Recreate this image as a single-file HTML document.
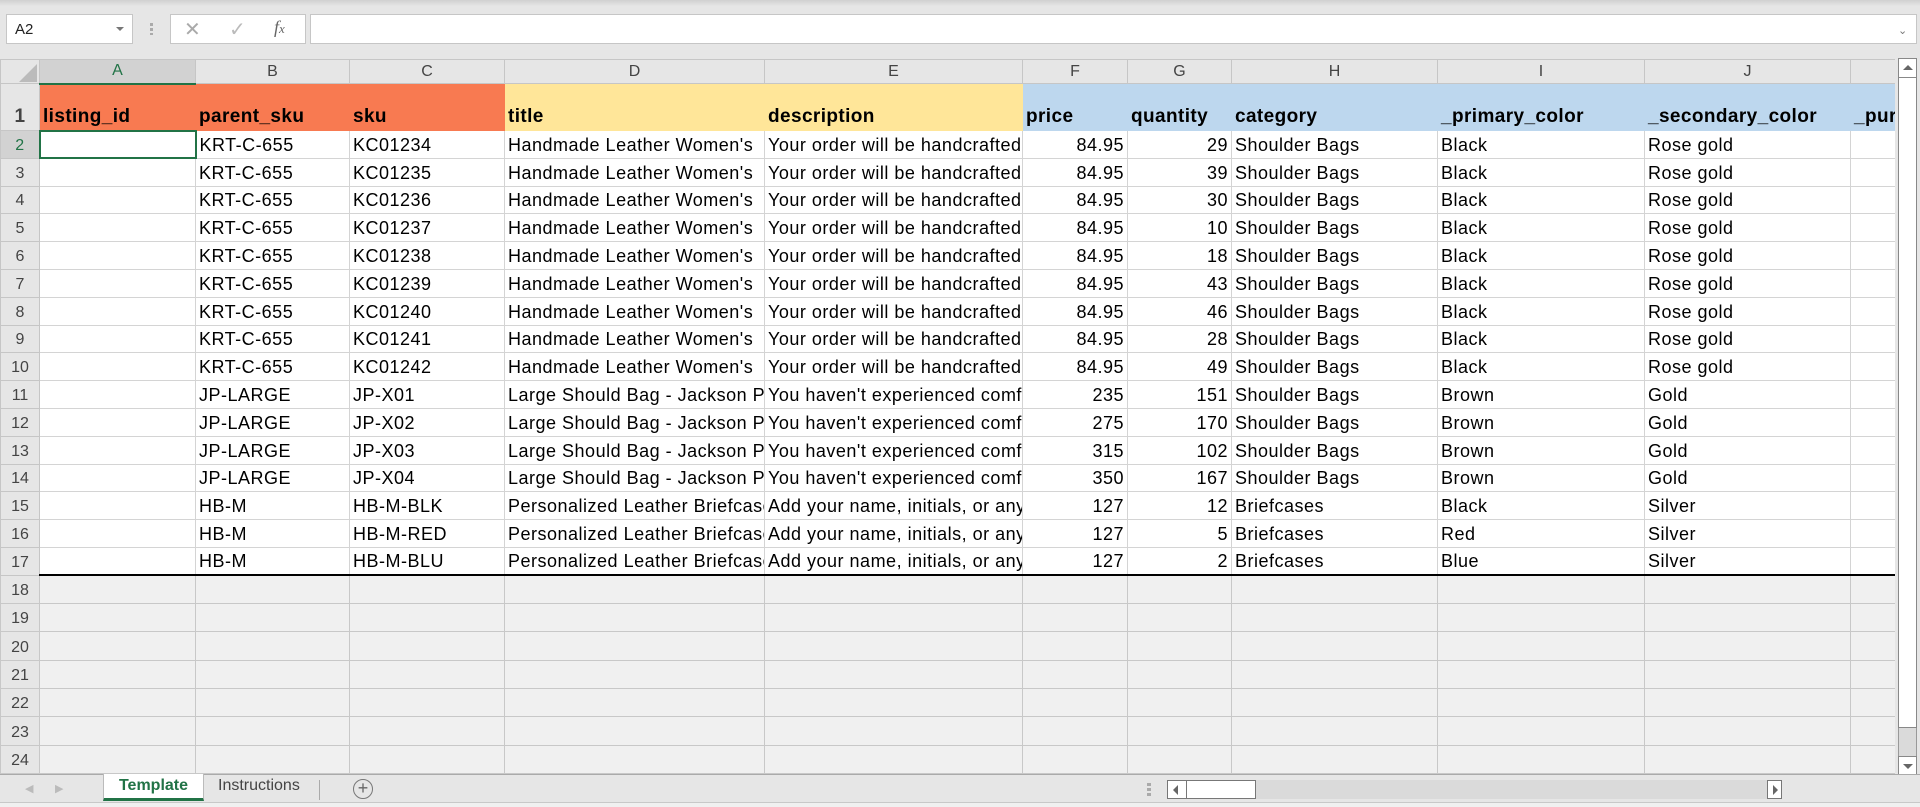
<!DOCTYPE html>
<html><head><meta charset="utf-8"><style>
*{box-sizing:border-box;margin:0;padding:0}
body{width:1920px;height:807px;background:#e6e6e6;font-family:"Liberation Sans",sans-serif;position:relative;overflow:hidden}
.abs{position:absolute}
table{position:absolute;left:0;top:59px;border-collapse:collapse;table-layout:fixed;width:1895px}
td{border:1px solid #d4d4d4;white-space:nowrap;overflow:hidden;font-size:18px;letter-spacing:0.5px;padding:0 3px;color:#000;vertical-align:bottom;padding-bottom:2px;background:#fff}
tr.ch td{background:#e6e6e6;color:#444;text-align:center;font-size:16px;letter-spacing:0;border-color:#c6c6c6;vertical-align:middle;padding:0;height:24px}
td.rh{background:#e6e6e6;color:#444;text-align:center;font-size:16px;letter-spacing:0;border-color:#c6c6c6;padding:0 0 3px 0}
tr.h1 td{height:47px;font-weight:bold;font-size:19px;letter-spacing:0.4px;padding-bottom:2px}
tr.h1 td.o{background:#f87a51;border-color:#f87a51}
tr.h1 td.y{background:#ffe699;border-color:#ffe699}
tr.h1 td.b{background:#bdd7ee;border-color:#bdd7ee}
tr.d td{height:27.8px}
tr.e td{height:28.3px;background:#f0f0f0;border-color:#c8c8c8}
tr.e td.rh{background:#e6e6e6}
td.n{text-align:right}
tr.last td{border-bottom:2px solid #000}
tr.last td.rh{border-bottom:1px solid #c6c6c6}
</style></head><body>
<div class="abs" style="left:0;top:0;width:1920px;height:6px;background:linear-gradient(#d0d0d0,#e6e6e6)"></div>
<div class="abs" style="left:6px;top:14px;width:127px;height:30px;background:#fff;border:1px solid #c6c6c6;font-size:15px;padding:6px 0 0 8px;color:#222">A2</div>
<div class="abs" style="left:116px;top:27px;width:0;height:0;border-left:4px solid transparent;border-right:4px solid transparent;border-top:4px solid #777"></div>
<div class="abs" style="left:150px;top:23px;width:3px;height:12px;background:repeating-linear-gradient(#aaa 0 3px,transparent 3px 5px)"></div>
<div class="abs" style="left:170px;top:14px;width:136px;height:30px;background:#fff;border:1px solid #c6c6c6"></div>
<div class="abs" style="left:184px;top:17px;font-size:20px;color:#aaa">✕</div>
<div class="abs" style="left:229px;top:17px;font-size:20px;color:#bbb">✓</div>
<div class="abs" style="left:274px;top:17px;font-size:18px;color:#666;font-family:'Liberation Serif',serif;font-style:italic">f<span style="font-size:13px">x</span></div>
<div class="abs" style="left:310px;top:14px;width:1607px;height:30px;background:#fff;border:1px solid #c6c6c6"></div>
<div class="abs" style="left:1898px;top:24px;font-size:11px;color:#777">&#8964;</div>

<table>
<colgroup><col style="width:39px"><col style="width:156px"><col style="width:154px"><col style="width:155px"><col style="width:260px"><col style="width:258px"><col style="width:105px"><col style="width:104px"><col style="width:206px"><col style="width:207px"><col style="width:206px"><col style="width:45px"></colgroup>
<tr class="ch"><td style="background:#e6e6e6"><div style="width:0;height:0;border-left:18px solid transparent;border-bottom:18px solid #bbb;margin:3px 0 0 18px"></div></td><td style="background:#d2d2d2;color:#217346;border-bottom:2px solid #217346">A</td><td>B</td><td>C</td><td>D</td><td>E</td><td>F</td><td>G</td><td>H</td><td>I</td><td>J</td><td></td></tr>
<tr class="h1"><td class="rh">1</td><td class="o">listing_id</td><td class="o">parent_sku</td><td class="o">sku</td><td class="y">title</td><td class="y">description</td><td class="b">price</td><td class="b">quantity</td><td class="b">category</td><td class="b">_primary_color</td><td class="b">_secondary_color</td><td class="b">_pur</td></tr>
<tr class="d"><td class="rh" style="background:#d2d2d2;color:#217346">2</td><td style="border:2px solid #217346"></td><td>KRT-C-655</td><td>KC01234</td><td>Handmade Leather Women's</td><td>Your order will be handcrafted</td><td class="n">84.95</td><td class="n">29</td><td>Shoulder Bags</td><td>Black</td><td>Rose gold</td><td></td></tr>
<tr class="d"><td class="rh">3</td><td></td><td>KRT-C-655</td><td>KC01235</td><td>Handmade Leather Women's</td><td>Your order will be handcrafted</td><td class="n">84.95</td><td class="n">39</td><td>Shoulder Bags</td><td>Black</td><td>Rose gold</td><td></td></tr>
<tr class="d"><td class="rh">4</td><td></td><td>KRT-C-655</td><td>KC01236</td><td>Handmade Leather Women's</td><td>Your order will be handcrafted</td><td class="n">84.95</td><td class="n">30</td><td>Shoulder Bags</td><td>Black</td><td>Rose gold</td><td></td></tr>
<tr class="d"><td class="rh">5</td><td></td><td>KRT-C-655</td><td>KC01237</td><td>Handmade Leather Women's</td><td>Your order will be handcrafted</td><td class="n">84.95</td><td class="n">10</td><td>Shoulder Bags</td><td>Black</td><td>Rose gold</td><td></td></tr>
<tr class="d"><td class="rh">6</td><td></td><td>KRT-C-655</td><td>KC01238</td><td>Handmade Leather Women's</td><td>Your order will be handcrafted</td><td class="n">84.95</td><td class="n">18</td><td>Shoulder Bags</td><td>Black</td><td>Rose gold</td><td></td></tr>
<tr class="d"><td class="rh">7</td><td></td><td>KRT-C-655</td><td>KC01239</td><td>Handmade Leather Women's</td><td>Your order will be handcrafted</td><td class="n">84.95</td><td class="n">43</td><td>Shoulder Bags</td><td>Black</td><td>Rose gold</td><td></td></tr>
<tr class="d"><td class="rh">8</td><td></td><td>KRT-C-655</td><td>KC01240</td><td>Handmade Leather Women's</td><td>Your order will be handcrafted</td><td class="n">84.95</td><td class="n">46</td><td>Shoulder Bags</td><td>Black</td><td>Rose gold</td><td></td></tr>
<tr class="d"><td class="rh">9</td><td></td><td>KRT-C-655</td><td>KC01241</td><td>Handmade Leather Women's</td><td>Your order will be handcrafted</td><td class="n">84.95</td><td class="n">28</td><td>Shoulder Bags</td><td>Black</td><td>Rose gold</td><td></td></tr>
<tr class="d"><td class="rh">10</td><td></td><td>KRT-C-655</td><td>KC01242</td><td>Handmade Leather Women's</td><td>Your order will be handcrafted</td><td class="n">84.95</td><td class="n">49</td><td>Shoulder Bags</td><td>Black</td><td>Rose gold</td><td></td></tr>
<tr class="d"><td class="rh">11</td><td></td><td>JP-LARGE</td><td>JP-X01</td><td>Large Should Bag - Jackson Piece</td><td>You haven't experienced comfort</td><td class="n">235</td><td class="n">151</td><td>Shoulder Bags</td><td>Brown</td><td>Gold</td><td></td></tr>
<tr class="d"><td class="rh">12</td><td></td><td>JP-LARGE</td><td>JP-X02</td><td>Large Should Bag - Jackson Piece</td><td>You haven't experienced comfort</td><td class="n">275</td><td class="n">170</td><td>Shoulder Bags</td><td>Brown</td><td>Gold</td><td></td></tr>
<tr class="d"><td class="rh">13</td><td></td><td>JP-LARGE</td><td>JP-X03</td><td>Large Should Bag - Jackson Piece</td><td>You haven't experienced comfort</td><td class="n">315</td><td class="n">102</td><td>Shoulder Bags</td><td>Brown</td><td>Gold</td><td></td></tr>
<tr class="d"><td class="rh">14</td><td></td><td>JP-LARGE</td><td>JP-X04</td><td>Large Should Bag - Jackson Piece</td><td>You haven't experienced comfort</td><td class="n">350</td><td class="n">167</td><td>Shoulder Bags</td><td>Brown</td><td>Gold</td><td></td></tr>
<tr class="d"><td class="rh">15</td><td></td><td>HB-M</td><td>HB-M-BLK</td><td>Personalized Leather Briefcase</td><td>Add your name, initials, or any</td><td class="n">127</td><td class="n">12</td><td>Briefcases</td><td>Black</td><td>Silver</td><td></td></tr>
<tr class="d"><td class="rh">16</td><td></td><td>HB-M</td><td>HB-M-RED</td><td>Personalized Leather Briefcase</td><td>Add your name, initials, or any</td><td class="n">127</td><td class="n">5</td><td>Briefcases</td><td>Red</td><td>Silver</td><td></td></tr>
<tr class="d last"><td class="rh">17</td><td></td><td>HB-M</td><td>HB-M-BLU</td><td>Personalized Leather Briefcase</td><td>Add your name, initials, or any</td><td class="n">127</td><td class="n">2</td><td>Briefcases</td><td>Blue</td><td>Silver</td><td></td></tr>
<tr class="e"><td class="rh">18</td><td></td><td></td><td></td><td></td><td></td><td></td><td></td><td></td><td></td><td></td><td></td></tr>
<tr class="e"><td class="rh">19</td><td></td><td></td><td></td><td></td><td></td><td></td><td></td><td></td><td></td><td></td><td></td></tr>
<tr class="e"><td class="rh">20</td><td></td><td></td><td></td><td></td><td></td><td></td><td></td><td></td><td></td><td></td><td></td></tr>
<tr class="e"><td class="rh">21</td><td></td><td></td><td></td><td></td><td></td><td></td><td></td><td></td><td></td><td></td><td></td></tr>
<tr class="e"><td class="rh">22</td><td></td><td></td><td></td><td></td><td></td><td></td><td></td><td></td><td></td><td></td><td></td></tr>
<tr class="e"><td class="rh">23</td><td></td><td></td><td></td><td></td><td></td><td></td><td></td><td></td><td></td><td></td><td></td></tr>
<tr class="e"><td class="rh">24</td><td></td><td></td><td></td><td></td><td></td><td></td><td></td><td></td><td></td><td></td><td></td></tr>
</table>

<div class="abs" style="left:1895px;top:58px;width:25px;height:716px;background:#e6e6e6"></div>
<div class="abs" style="left:1898px;top:58px;width:19px;height:717px;background:#dadada;border:1px solid #999"></div>
<div class="abs" style="left:1898px;top:58px;width:19px;height:20px;background:#fff;border:1px solid #888"></div>
<div class="abs" style="left:1903px;top:65px;width:0;height:0;border-left:5px solid transparent;border-right:5px solid transparent;border-bottom:5px solid #666"></div>
<div class="abs" style="left:1898px;top:77px;width:19px;height:651px;background:#fff;border:1px solid #888"></div>
<div class="abs" style="left:1898px;top:756px;width:19px;height:19px;background:#fff;border:1px solid #888"></div>
<div class="abs" style="left:1903px;top:764px;width:0;height:0;border-left:5px solid transparent;border-right:5px solid transparent;border-top:5px solid #666"></div>

<div class="abs" style="left:0;top:774px;width:1920px;height:29px;background:#e6e6e6;border-top:1px solid #aaa"></div>
<div class="abs" style="left:0;top:802px;width:1920px;height:5px;background:#f0f0f0;border-top:1px solid #c8c8c8"></div>
<div class="abs" style="left:25px;top:782px;font-size:11px;color:#bbb">◀</div>
<div class="abs" style="left:55px;top:782px;font-size:11px;color:#bbb">▶</div>
<div class="abs" style="left:103px;top:774px;width:101px;height:27px;background:#fff;border-bottom:3px solid #217346;border-left:1px solid #bbb;border-right:1px solid #bbb;text-align:center;font-weight:bold;font-size:16px;color:#217346;padding-top:3px">Template</div>
<div class="abs" style="left:218px;top:777px;font-size:16px;color:#444">Instructions</div>
<div class="abs" style="left:319px;top:780px;width:1px;height:20px;background:#aaa"></div>
<div class="abs" style="left:353px;top:779px;width:20px;height:20px;border:1.5px solid #777;border-radius:50%;text-align:center;font-size:18px;line-height:16px;color:#666">+</div>
<div class="abs" style="left:1147px;top:783px;width:4px;height:14px;background:repeating-linear-gradient(#aaa 0 3px,transparent 3px 5px)"></div>
<div class="abs" style="left:1167px;top:780px;width:615px;height:19px;background:#dadada"></div>
<div class="abs" style="left:1167px;top:780px;width:20px;height:19px;background:#fff;border:1px solid #777"></div>
<div class="abs" style="left:1173px;top:785px;width:0;height:0;border-top:5px solid transparent;border-bottom:5px solid transparent;border-right:5px solid #666"></div>
<div class="abs" style="left:1186px;top:780px;width:70px;height:19px;background:#fff;border:1px solid #777"></div>
<div class="abs" style="left:1767px;top:780px;width:15px;height:19px;background:#fff;border:1px solid #777"></div>
<div class="abs" style="left:1773px;top:785px;width:0;height:0;border-top:5px solid transparent;border-bottom:5px solid transparent;border-left:5px solid #666"></div>
</body></html>
